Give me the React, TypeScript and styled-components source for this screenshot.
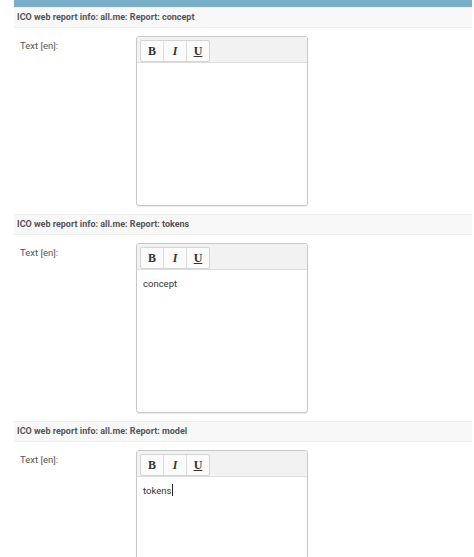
import React from "react";
import styled, { createGlobalStyle } from "styled-components";

const Global = createGlobalStyle`
  html, body { margin: 0; padding: 0; background: #fff; }
  body { font-family: Roboto, "Liberation Sans", sans-serif; }
`;

const Page = styled.div`
  padding-left: 14px;
  width: 458px;
  height: 557px;
  overflow: hidden;
`;

const TopBar = styled.div`
  height: 7px;
  background: #79aec8;
`;

const Section = styled.section`
  display: flex;
  flex-direction: column;
`;

const Header = styled.h3<{ $first?: boolean }>`
  margin: 0;
  height: 19px;
  line-height: 19px;
  padding: 0 0 0 3px;
  background: #f8f8f8;
  border-top: 1px solid ${(p) => (p.$first ? "#e4f0f7" : "#eeeeee")};
  border-bottom: 1px solid #eeeeee;
  font-size: 9px;
  font-weight: 700;
  color: #555;
`;

const Row = styled.div`
  display: flex;
  padding: 8px 0 8px 0;
`;

const Label = styled.div`
  width: 122px;
  padding: 4px 0 0 6px;
  box-sizing: border-box;
  font-size: 9.5px;
  color: #555;
`;

const Editor = styled.div`
  width: 172px;
  height: 170px;
  box-sizing: border-box;
  border: 1px solid #c8c8c8;
  border-radius: 3px;
  box-shadow: 0 1px 1px rgba(0, 0, 0, 0.08);
  display: flex;
  flex-direction: column;
  background: #fff;
  overflow: hidden;
`;

const Toolbar = styled.div`
  height: 26px;
  background: #f2f2f2;
  border-bottom: 1px solid #dddddd;
  padding: 3px 0 0 3px;
  box-sizing: border-box;
  display: flex;
`;

const ButtonGroup = styled.div`
  display: flex;
  height: 20px;
  border: 1px solid #d4d4d4;
  border-radius: 2px;
  background: #fbfbfb;
`;

const ToolButton = styled.span<{ $italic?: boolean; $underline?: boolean; $last?: boolean }>`
  width: 22px;
  display: flex;
  align-items: center;
  justify-content: center;
  border-right: ${(p) => (p.$last ? "none" : "1px solid #dedede")};
  font-family: "Liberation Serif", "DejaVu Serif", serif;
  font-weight: 700;
  font-size: 12px;
  color: #333;
  font-style: ${(p) => (p.$italic ? "italic" : "normal")};
  text-decoration: ${(p) => (p.$underline ? "underline" : "none")};
`;

const Content = styled.div`
  padding: 7px 6px;
  font-size: 9.5px;
  color: #333;
  display: flex;
  align-items: center;
  height: 12px;
  box-sizing: content-box;
`;

const Caret = styled.span`
  display: inline-block;
  width: 1px;
  height: 12px;
  background: #222;
  margin-left: 0.5px;
`;

const sections = [
  { title: "ICO web report info: all.me: Report: concept", text: "", caret: false },
  { title: "ICO web report info: all.me: Report: tokens", text: "concept", caret: false },
  { title: "ICO web report info: all.me: Report: model", text: "tokens", caret: true },
];

export default function App() {
  return (
    <>
      <Global />
      <Page>
        <TopBar />
        {sections.map((s, i) => (
          <Section key={i}>
            <Header $first={i === 0}>{s.title}</Header>
            <Row>
              <Label>Text [en]:</Label>
              <Editor>
                <Toolbar>
                  <ButtonGroup>
                    <ToolButton>B</ToolButton>
                    <ToolButton $italic>I</ToolButton>
                    <ToolButton $underline $last>U</ToolButton>
                  </ButtonGroup>
                </Toolbar>
                <Content>
                  {s.text}
                  {s.caret && <Caret />}
                </Content>
              </Editor>
            </Row>
          </Section>
        ))}
      </Page>
    </>
  );
}
